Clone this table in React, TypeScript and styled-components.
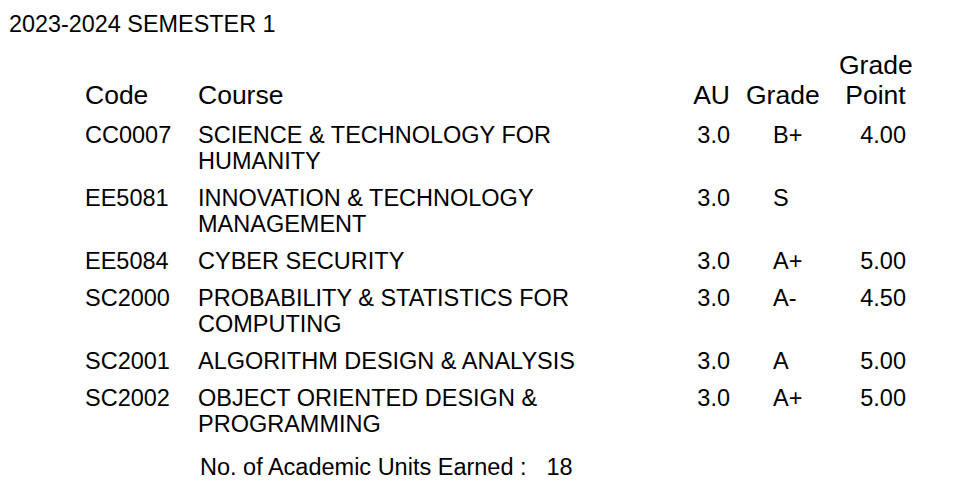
import React from "react";
import styled, { createGlobalStyle } from "styled-components";

const GlobalStyle = createGlobalStyle`
  html, body {
    margin: 0;
    padding: 0;
    background: #ffffff;
  }
  body {
    font-family: "Liberation Sans", Arial, sans-serif;
    color: #000000;
  }
`;

interface Course {
  code: string;
  title: string;
  au: string;
  grade: string;
  point?: string;
}

const courses: Course[] = [
  { code: "CC0007", title: "SCIENCE & TECHNOLOGY FOR HUMANITY", au: "3.0", grade: "B+", point: "4.00" },
  { code: "EE5081", title: "INNOVATION & TECHNOLOGY MANAGEMENT", au: "3.0", grade: "S" },
  { code: "EE5084", title: "CYBER SECURITY", au: "3.0", grade: "A+", point: "5.00" },
  { code: "SC2000", title: "PROBABILITY & STATISTICS FOR COMPUTING", au: "3.0", grade: "A-", point: "4.50" },
  { code: "SC2001", title: "ALGORITHM DESIGN & ANALYSIS", au: "3.0", grade: "A", point: "5.00" },
  { code: "SC2002", title: "OBJECT ORIENTED DESIGN & PROGRAMMING", au: "3.0", grade: "A+", point: "5.00" },
];

const Page = styled.div`
  padding: 11px 0 0 9px;
  font-size: 23.5px;
`;

const Title = styled.h1`
  margin: 0;
  font-size: 23.4px;
  font-weight: 400;
  line-height: 26px;
`;

const Table = styled.div`
  margin: 13px 0 0 76px;
  display: flex;
  flex-direction: column;
`;

const Row = styled.div<{ $header?: boolean }>`
  display: grid;
  grid-template-columns: 113px 440px 92px 109px 73px;
  align-items: ${({ $header }) => ($header ? "end" : "start")};
  font-size: ${({ $header }) => ($header ? "26.5px" : "23.5px")};
  line-height: ${({ $header }) => ($header ? "30px" : "26px")};
  margin-bottom: ${({ $header }) => ($header ? "12px" : "11px")};
`;

const Cell = styled.div<{ $align?: "left" | "right" | "center"; $indent?: number; $pad?: number }>`
  text-align: ${({ $align }) => $align || "left"};
  padding-left: ${({ $indent }) => $indent || 0}px;
  padding-right: ${({ $pad }) => $pad || 0}px;
`;

const Summary = styled.div`
  display: grid;
  grid-template-columns: 113px auto;
  margin-top: 6px;
  line-height: 26px;
`;

const SummaryText = styled.div`
  grid-column: 2;
  display: flex;
  gap: 20px;
  padding-left: 2px;
`;

export default function App() {
  return (
    <>
      <GlobalStyle />
      <Page>
        <Title>2023-2024 SEMESTER 1</Title>
        <Table>
          <Row $header>
            <Cell>Code</Cell>
            <Cell>Course</Cell>
            <Cell $align="right">AU</Cell>
            <Cell $indent={16}>Grade</Cell>
            <Cell $align="center">
              Grade
              <br />
              Point
            </Cell>
          </Row>
          {courses.map((c) => (
            <Row key={c.code}>
              <Cell>{c.code}</Cell>
              <Cell>{c.title}</Cell>
              <Cell $align="right">{c.au}</Cell>
              <Cell $indent={43}>{c.grade}</Cell>
              <Cell $align="right" $pad={6}>
                {c.point}
              </Cell>
            </Row>
          ))}
          <Summary>
            <SummaryText>
              <span>No. of Academic Units Earned :</span>
              <span>18</span>
            </SummaryText>
          </Summary>
        </Table>
      </Page>
    </>
  );
}
